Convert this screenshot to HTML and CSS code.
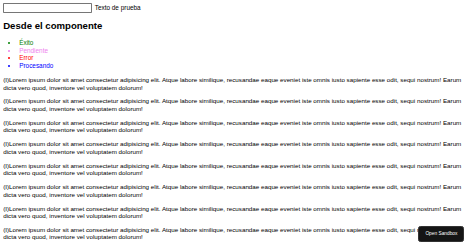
FILE: index.html
```html
<!DOCTYPE html>
<html lang="es">
<head>
  <meta charset="UTF-8">
  <title>Desde el componente</title>
  <link rel="stylesheet" href="styles.css">
</head>
<body>
  <div class="field">
    <input type="text" class="test-input">
    <label>Texto de prueba</label>
  </div>

  <h2>Desde el componente</h2>

  <ul class="states">
    <li class="ok">Éxito</li>
    <li class="pending">Pendiente</li>
    <li class="error">Error</li>
    <li class="busy">Procesando</li>
  </ul>

  <div class="list">
    <p>(I)Lorem ipsum dolor sit amet consectetur adipisicing elit. Atque labore similique, recusandae eaque eveniet iste omnis iusto sapiente esse odit, sequi nostrum! Earum dicta vero quod, inventore vel voluptatem dolorum!</p>
    <p>(I)Lorem ipsum dolor sit amet consectetur adipisicing elit. Atque labore similique, recusandae eaque eveniet iste omnis iusto sapiente esse odit, sequi nostrum! Earum dicta vero quod, inventore vel voluptatem dolorum!</p>
    <p>(I)Lorem ipsum dolor sit amet consectetur adipisicing elit. Atque labore similique, recusandae eaque eveniet iste omnis iusto sapiente esse odit, sequi nostrum! Earum dicta vero quod, inventore vel voluptatem dolorum!</p>
    <p>(I)Lorem ipsum dolor sit amet consectetur adipisicing elit. Atque labore similique, recusandae eaque eveniet iste omnis iusto sapiente esse odit, sequi nostrum! Earum dicta vero quod, inventore vel voluptatem dolorum!</p>
    <p>(I)Lorem ipsum dolor sit amet consectetur adipisicing elit. Atque labore similique, recusandae eaque eveniet iste omnis iusto sapiente esse odit, sequi nostrum! Earum dicta vero quod, inventore vel voluptatem dolorum!</p>
    <p>(I)Lorem ipsum dolor sit amet consectetur adipisicing elit. Atque labore similique, recusandae eaque eveniet iste omnis iusto sapiente esse odit, sequi nostrum! Earum dicta vero quod, inventore vel voluptatem dolorum!</p>
    <p>(I)Lorem ipsum dolor sit amet consectetur adipisicing elit. Atque labore similique, recusandae eaque eveniet iste omnis iusto sapiente esse odit, sequi nostrum! Earum dicta vero quod, inventore vel voluptatem dolorum!</p>
    <p>(I)Lorem ipsum dolor sit amet consectetur adipisicing elit. Atque labore similique, recusandae eaque eveniet iste omnis iusto sapiente esse odit, sequi nostrum! Earum dicta vero quod, inventore vel voluptatem dolorum!</p>
    <p>(I)Lorem ipsum dolor sit amet consectetur adipisicing elit. Atque labore similique, recusandae eaque eveniet iste omnis iusto sapiente esse odit, sequi nostrum! Earum dicta vero quod, inventore vel voluptatem dolorum!</p>
    <p>(I)Lorem ipsum dolor sit amet consectetur adipisicing elit. Atque labore similique, recusandae eaque eveniet iste omnis iusto sapiente esse odit, sequi nostrum! Earum dicta vero quod, inventore vel voluptatem dolorum!</p>
  </div>

  <a href="#" class="sandbox-btn">Open Sandbox</a>
</body>
</html>
```

FILE: styles.css
```css
html {
  zoom: 0.4;
}

body {
  margin: 8px;
  font-family: 'Liberation Sans', Arial, sans-serif;
  font-size: 16px;
  line-height: 18.8px;
  color: #000;
  background: #fff;
}

.field {
  display: flex;
  align-items: center;
  gap: 6px;
}

.test-input {
  width: 214px;
  height: 17px;
  border: 2px solid #767676;
  border-radius: 2px;
  padding: 1px 2px;
  margin: 0;
}

.field label {
  font-size: 16px;
}

h2 {
  font-size: 24px;
  line-height: 28px;
  margin: 18px 0 20px;
}

.states {
  margin: 16px 0 17px;
  padding-left: 40px;
}

.states .ok {
  color: green;
}

.states .pending {
  color: violet;
}

.states .error {
  color: red;
}

.states .busy {
  color: blue;
}

.list p {
  font-size: 15.6px;
  margin: 16px 0;
}

.sandbox-btn {
  position: fixed;
  right: 24px;
  bottom: 14px;
  background-color: #151515;
  color: #fff;
  font-size: 12px;
  line-height: 14px;
  text-decoration: none;
  padding: 11px 15px;
  border-radius: 6px;
  border: 1px solid #333;
}
```
